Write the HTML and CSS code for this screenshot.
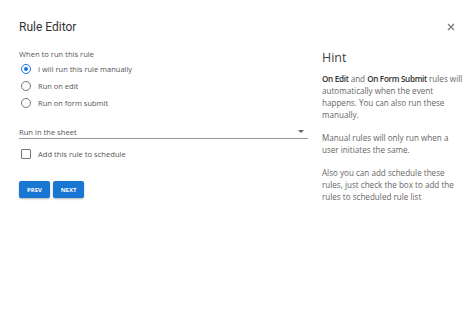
FILE: index.html
```html
<!DOCTYPE html>
<html>
<head>
<meta charset="utf-8">
<link rel="stylesheet" href="styles.css">
</head>
<body>
<div class="dialog">
  <div class="header">
    <h1 class="title">Rule Editor</h1>
    <button class="close" aria-label="Close">
      <svg width="8" height="8" viewBox="0 0 8 8"><path d="M1 1L7 7M7 1L1 7" stroke="#777" stroke-width="1.2"/></svg>
    </button>
  </div>
  <div class="body">
    <div class="form">
      <div class="legend">When to run this rule</div>
      <div class="radios">
        <label class="radio checked"><span class="dot"></span>I will run this rule manually</label>
        <label class="radio"><span class="dot"></span>Run on edit</label>
        <label class="radio"><span class="dot"></span>Run on form submit</label>
      </div>
      <div class="select">
        <span>Run in the sheet</span>
        <span class="arrow"></span>
      </div>
      <label class="check"><span class="box"></span>Add this rule to schedule</label>
      <div class="buttons">
        <button class="btn">PREV</button>
        <button class="btn">NEXT</button>
      </div>
    </div>
    <div class="hint">
      <h2 class="hint-title">Hint</h2>
      <p class="lead"><b>On Edit</b> and <b>On Form Submit</b> rules will<br>automatically when the event<br>happens. You can also run these<br>manually.</p>
      <p>Manual rules will only run when a user initiates the same.</p>
      <p>Also you can add schedule these rules, just check the box to add the rules to scheduled rule list</p>
    </div>
  </div>
</div>
</body>
</html>
```
FILE: styles.css
```css
html, body { margin: 0; padding: 0; background: #fff; }
body { font-family: "Open Sans", sans-serif; color: #555; }
.dialog { padding: 16px 18px 0 19px; }
.header { display: flex; justify-content: space-between; align-items: center; height: 22px; }
.title { margin: 0; font-family: Roboto, sans-serif; font-weight: 400; font-size: 12px; color: #333; }
.close { border: 0; background: none; padding: 0; width: 8px; height: 8px; display: flex; margin-right: 1px; }
.body { display: flex; margin-top: 11px; }
.form { width: 289px; flex-shrink: 0; }
.legend { font-size: 7.6px; line-height: 11px; color: #555; }
.radios { display: flex; flex-direction: column; }
.radio { display: flex; align-items: center; height: 17px; font-size: 7.5px; color: #555; }
.radio .dot { width: 8px; height: 8px; border: 1.2px solid #777; border-radius: 50%; margin: 0 7px 0 2px; box-sizing: content-box; position: relative; }
.radio.checked .dot { border-color: #1a73e8; }
.radio.checked .dot::after { content: ""; position: absolute; left: 2px; top: 2px; width: 4px; height: 4px; border-radius: 50%; background: #1a73e8; }
.select { margin-top: 14px; display: flex; justify-content: space-between; align-items: center; height: 13px; border-bottom: 1px solid #999; font-size: 7.6px; color: #555; }
.arrow { width: 0; height: 0; border-left: 3px solid transparent; border-right: 3px solid transparent; border-top: 3px solid #666; margin-right: 4px; }
.check { display: flex; align-items: center; margin-top: 9px; height: 12px; font-size: 7.6px; color: #555; }
.check .box { width: 8px; height: 8px; border: 1.2px solid #777; border-radius: 1px; margin: 0 7px 0 2px; box-sizing: content-box; }
.buttons { display: flex; gap: 3px; margin-top: 21px; }
.btn { width: 31px; height: 17px; border: 0; border-radius: 2px; background: #1976d2; color: #fff; font-family: "Open Sans", sans-serif; font-weight: 700; font-size: 6px; padding: 0; box-shadow: 0 1px 2px rgba(0,0,0,0.3); }
.hint { margin-left: 14px; width: 140px; flex-shrink: 0; }
.hint-title { margin: 1px 0 7px; font-family: "Open Sans", sans-serif; font-weight: 400; font-size: 12.5px; color: #444; line-height: 16px; }
.hint p { margin: 0 0 11px; font-size: 8.1px; line-height: 12px; color: #666; }
.hint p.lead { white-space: nowrap; }
.hint b { font-weight: 600; color: #333; letter-spacing: -0.3px; }
```
